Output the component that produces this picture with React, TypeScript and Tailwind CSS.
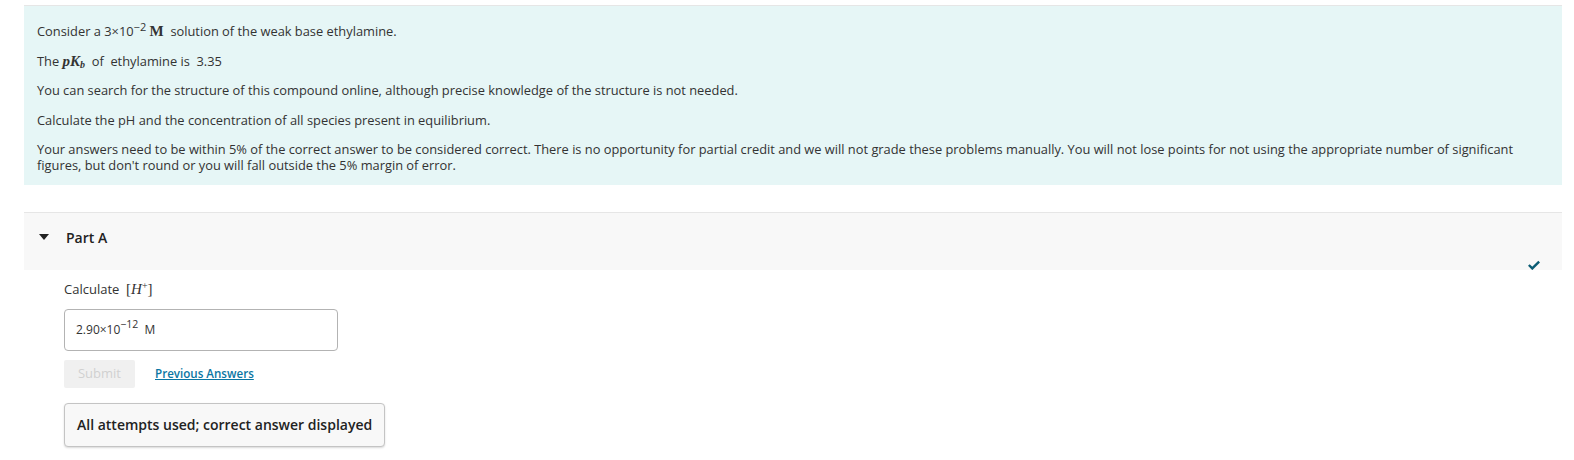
import React from 'react';

const sans = { fontFamily: '"Open Sans", "Noto Sans", sans-serif' };

function Sci({ m, e, size = 'text-[11px]' }: { m: string; e: string; size?: string }) {
  return (
    <span>
      {m}×10<sup className={size}>−{e}</sup>
    </span>
  );
}

function Math({ children }: { children: React.ReactNode }) {
  return <span className="font-['Liberation_Serif',serif] text-[15px]">{children}</span>;
}

export default function App() {
  return (
    <div className="min-h-[460px] w-[1574px] bg-white pt-[5px] text-[12.85px] text-[#333]" style={sans}>
      <div className="ml-6 mr-3 border-t border-[#e6e6e6]">
        <div className="flex flex-col gap-[13.5px] bg-[#e6f6f6] px-[13px] pb-[12px] pt-[17px] leading-[16px]">
          <p>
            Consider a <Sci m="3" e="2" /> <Math><b>M</b></Math>&nbsp; solution of the weak base ethylamine.
          </p>
          <p>
            The <Math><b><i>pK</i><sub className="text-[10px]"><i>b</i></sub></b></Math>&nbsp; of&nbsp; ethylamine is&nbsp; 3.35
          </p>
          <p>You can search for the structure of this compound online, although precise knowledge of the structure is not needed.</p>
          <p>Calculate the pH and the concentration of all species present in equilibrium.</p>
          <p>
            Your answers need to be within 5% of the correct answer to be considered correct. There is no opportunity for partial credit and we will not grade these problems manually. You will not lose points for not using the appropriate number of significant figures, but don't round or you will fall outside the 5% margin of error.
          </p>
        </div>
      </div>

      <div className="ml-6 mr-3 mt-[27px] border-t border-[#e6e6e6]">
        <div className="relative flex h-[57px] items-center bg-[#f8f8f8] pb-[9px] pl-[15px]">
          <svg viewBox="0 0 10 6" className="h-[6px] w-[10px]" aria-hidden>
            <path d="M0 0h10L5 6z" fill="#222" />
          </svg>
          <span className="ml-[17px] text-[14px] font-semibold text-[#222]">Part A</span>
          <svg viewBox="0 0 14 11" className="absolute bottom-0 right-[22px] h-[10px] w-[12px]" aria-hidden>
            <path d="M1 5.5l4 4L13 1.5" fill="none" stroke="#0b5c74" strokeWidth="2.8" />
          </svg>
        </div>

        <div className="pl-10 pt-[8px]">
          <div className="flex items-center text-[13px]">
            Calculate&nbsp;&nbsp;
            <Math>[<i>H</i><sup className="text-[10px]">+</sup>]</Math>
          </div>
          <div className="mt-[8px] flex h-[42px] w-[274px] items-center rounded-[4px] border border-[#b3b3b3] px-[11px] text-[12px]">
            <Sci m="2.90" e="12" size="text-[10.5px]" />&nbsp;&nbsp;M
          </div>
          <div className="mt-[9px] flex items-center">
            <button className="h-[28px] w-[71px] rounded-[2px] bg-[#f0f0f0] text-[13px] text-[#d0d0d0]">Submit</button>
            <a className="ml-[20px] text-[11.6px] font-semibold text-[#0a76a3] underline">Previous Answers</a>
          </div>
          <div className="mt-[15px] inline-flex h-[44px] items-center whitespace-nowrap rounded-[4px] border border-[#c4c4c4] bg-[#f8f8f8] px-[12px] text-[14px] font-semibold text-[#222] shadow-[0_1px_2px_rgba(0,0,0,0.15)]">
            All attempts used; correct answer displayed
          </div>
        </div>
      </div>
    </div>
  );
}
